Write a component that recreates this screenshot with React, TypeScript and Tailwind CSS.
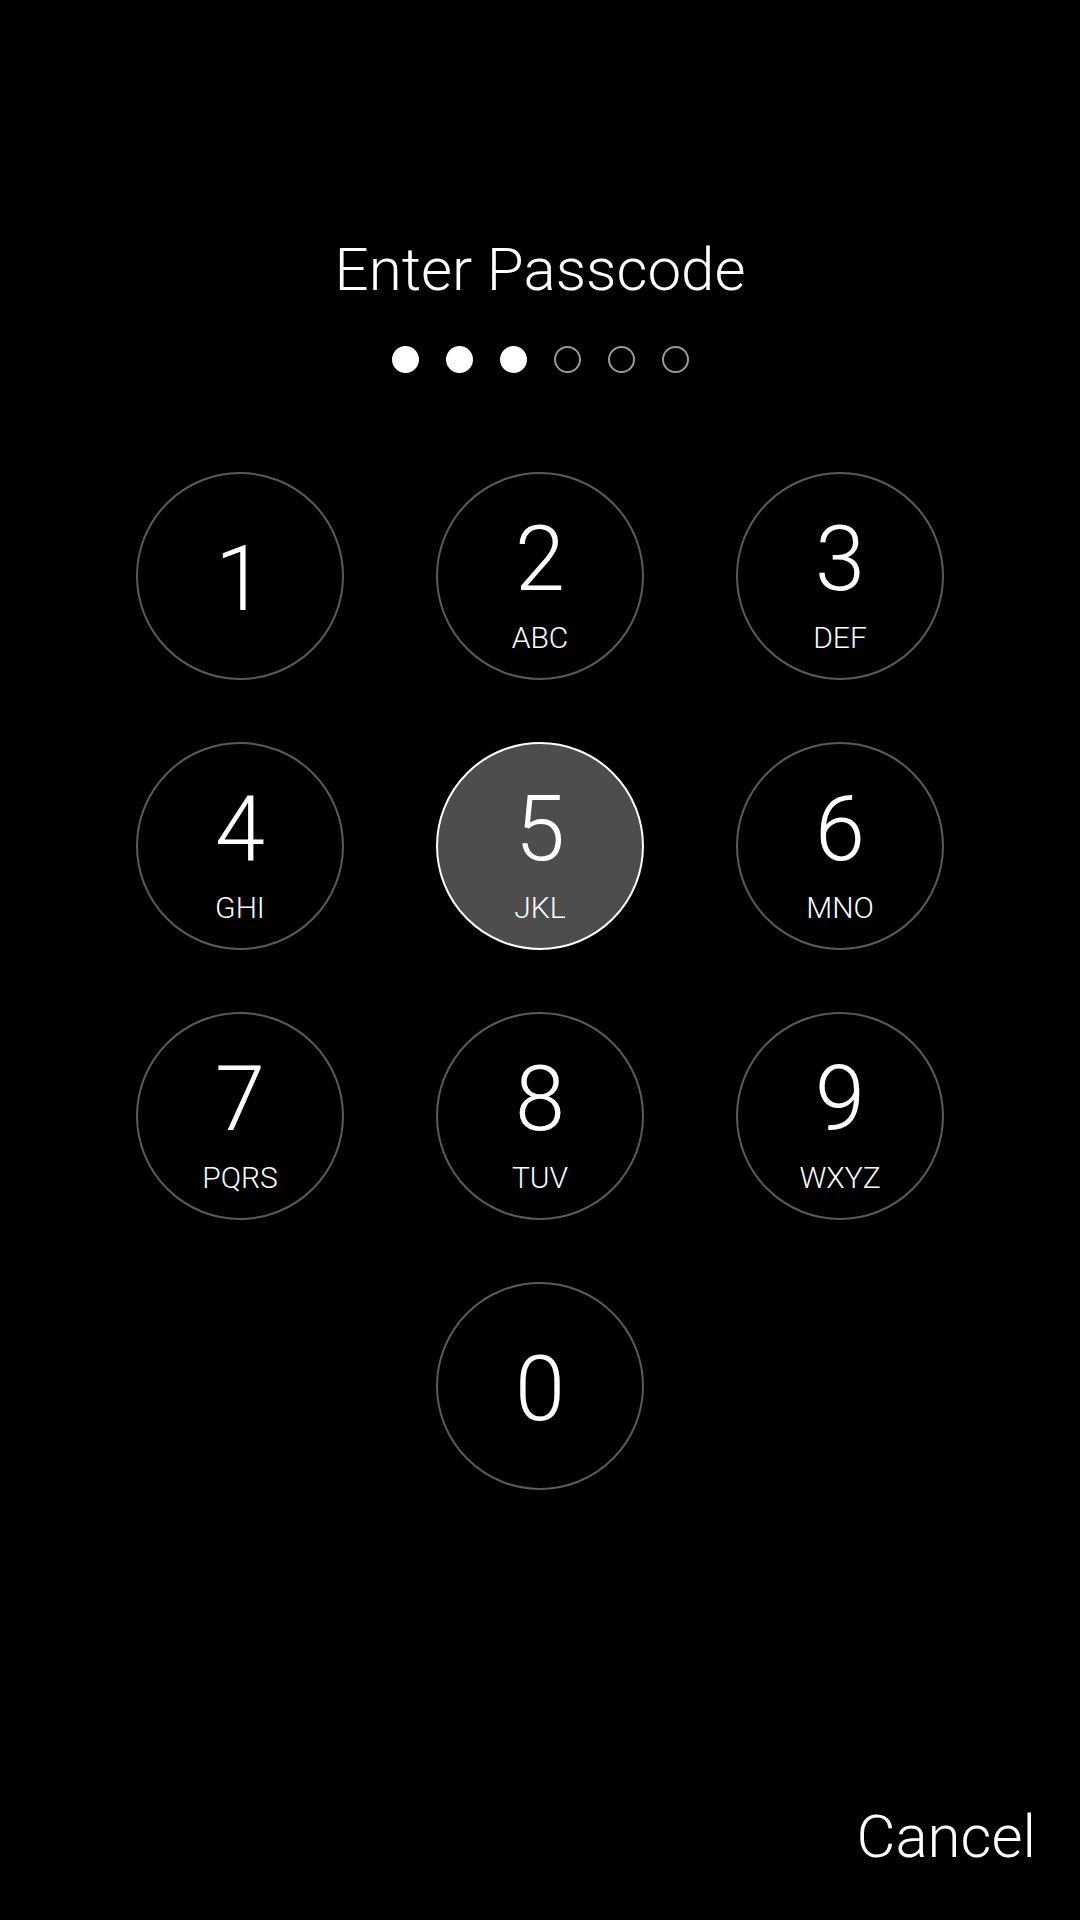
const KEYS = [
  { digit: "1", letters: "" },
  { digit: "2", letters: "ABC" },
  { digit: "3", letters: "DEF" },
  { digit: "4", letters: "GHI" },
  { digit: "5", letters: "JKL", pressed: true },
  { digit: "6", letters: "MNO" },
  { digit: "7", letters: "PQRS" },
  { digit: "8", letters: "TUV" },
  { digit: "9", letters: "WXYZ" },
];

const FILLED = 3;

function Key({ digit, letters, pressed, className = "" }: { digit: string; letters: string; pressed?: boolean; className?: string }) {
  const ring = pressed ? "border-white bg-[#4d4d4d]" : "border-[#5a5a5a] bg-black";
  return (
    <div
      className={`box-border flex h-[208px] w-[208px] flex-col items-center rounded-full border-2 ${ring} ${
        letters ? "justify-start pt-[41px]" : "justify-center pt-[8px]"
      } ${className}`}
    >
      <span className="text-[90px] font-light leading-none">{digit}</span>
      {letters && <span className="mt-[18px] text-[30px] font-light leading-none">{letters}</span>}
    </div>
  );
}

export default function App() {
  return (
    <div
      className="flex h-[1920px] w-[1080px] flex-col items-center bg-black text-white"
      style={{ fontFamily: "Roboto, 'Noto Sans', sans-serif" }}
    >
      {/* Title */}
      <h1 className="pt-[240px] text-[60px] font-light leading-none">Enter Passcode</h1>

      {/* Passcode dots */}
      <div className="mt-[46px] flex gap-[27px]">
        {Array.from({ length: 6 }).map((_, i) => (
          <div
            key={i}
            className={`box-border h-[27px] w-[27px] rounded-full ${
              i < FILLED ? "bg-white" : "border-2 border-[#9a9a9a]"
            }`}
          />
        ))}
      </div>

      {/* Keypad */}
      <div className="mt-[99px] grid grid-cols-[208px_208px_208px] gap-x-[92px] gap-y-[62px]">
        {KEYS.map((k) => (
          <Key key={k.digit} digit={k.digit} letters={k.letters} pressed={k.pressed} />
        ))}
        <Key digit="0" letters="" className="col-start-2" />
      </div>

      {/* Cancel */}
      <div className="mt-auto flex w-full justify-end pb-[53px] pr-[44px]">
        <span className="text-[60px] font-light leading-none">Cancel</span>
      </div>
    </div>
  );
}
